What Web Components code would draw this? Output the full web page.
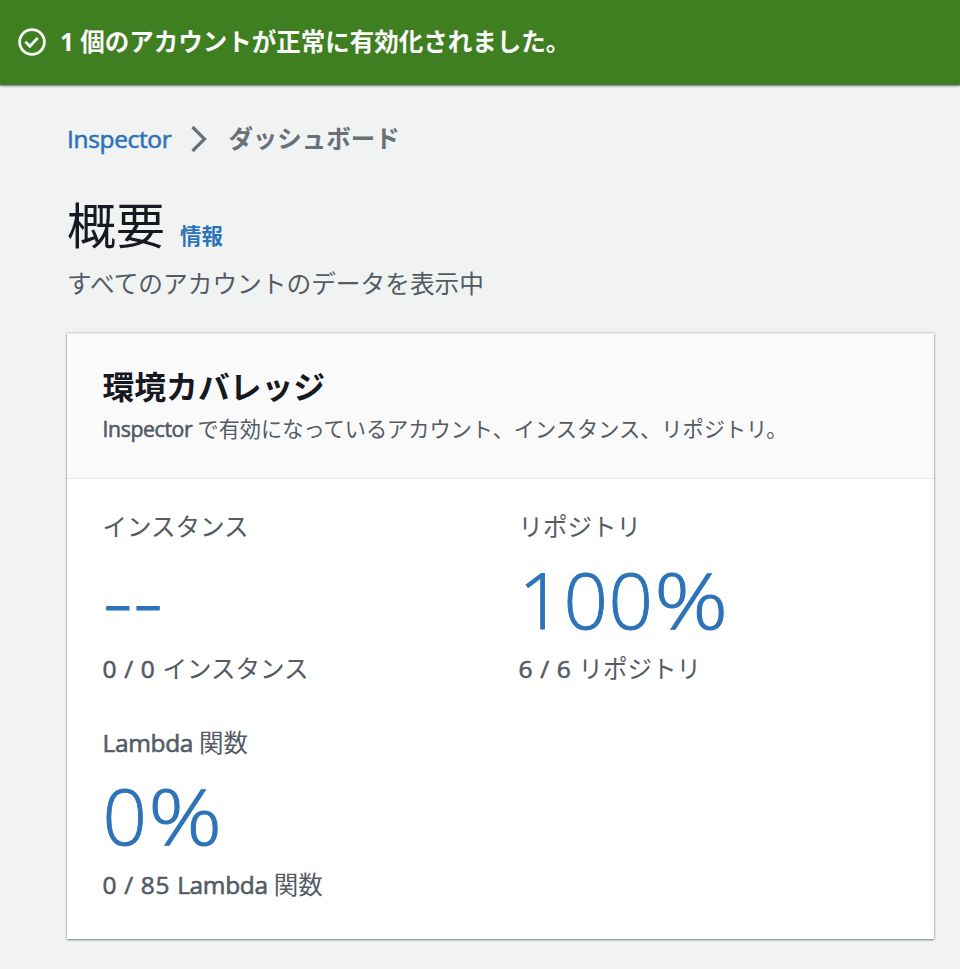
<!DOCTYPE html>
<html lang="ja">
  <head>
    <meta charset="utf-8" />
    <title>Inspector</title>
    <style>
      body {
        margin: 0;
        min-height: 969px;
        background: #f1f3f3;
        color: #545b64;
        font-family: 'Open Sans', 'Noto Sans CJK JP', sans-serif;
        font-size: 24.5px;
      }
    </style>
  </head>
  <body>
    <template id="flash-tmpl">
      <style>
        :host {
          display: flex;
          align-items: center;
          gap: 14px;
          box-sizing: border-box;
          height: 85px;
          padding: 0 18px 1px;
          background: #3f7f22;
          color: #fafafa;
          font-size: 24.5px;
          font-weight: 700;
          line-height: 36px;
          box-shadow: 0 1px 2px #6b6672;
        }
        svg {
          flex: none;
          width: 28px;
          height: 28px;
        }
      </style>
      <svg viewBox="0 0 28 28" fill="none" stroke="currentColor" stroke-width="2.8">
        <circle cx="14" cy="14" r="12.4" />
        <path d="M7.4 13.8l4.5 4.4 7.8-8.2" />
      </svg>
      <span><slot></slot></span>
    </template>

    <template id="crumbs-tmpl">
      <style>
        :host {
          display: flex;
          align-items: center;
          gap: 19px;
          height: 36px;
          line-height: 36px;
        }
        a {
          color: #2e73b8;
        }
        svg {
          width: 18px;
          height: 28px;
        }
        b {
          margin-left: 1px;
          color: #687078;
        }
      </style>
      <a><slot name="parent"></slot></a>
      <svg viewBox="0 0 18 28" fill="none" stroke="#687078" stroke-width="3.2">
        <path d="M2.5 2L14.5 14 2.5 26" />
      </svg>
      <b><slot></slot></b>
    </template>

    <template id="heading-tmpl">
      <style>
        :host {
          display: block;
        }
        .row {
          display: flex;
          align-items: baseline;
          gap: 15px;
          height: 76px;
          line-height: 72px;
        }
        h1 {
          margin: 0;
          color: #16191f;
          font-size: 49px;
          font-weight: 400;
        }
        .info {
          color: #2e73b8;
          font-size: 21.4px;
          font-weight: 700;
        }
        p {
          margin: 0;
          font-size: 24.7px;
          line-height: 38px;
        }
      </style>
      <div class="row">
        <h1><slot></slot></h1>
        <span class="info"><slot name="info"></slot></span>
      </div>
      <p><slot name="description"></slot></p>
    </template>

    <template id="card-tmpl">
      <style>
        :host {
          display: block;
          background: #fff;
          box-shadow: 0 1px 2px #7d878b, 0 0 2px #aab7b8;
        }
        header {
          box-sizing: border-box;
          height: 146px;
          padding: 30px 35px 0 35.5px;
          border-top: 1px solid #e9ebeb;
          border-bottom: 1px solid #e6e9e9;
          background: #fafafa;
        }
        h2 {
          margin: 0;
          color: #16191f;
          font-size: 31.8px;
          line-height: 45px;
        }
        p {
          margin: 0;
          font-size: 21.2px;
          line-height: 40px;
        }
        .body {
          display: grid;
          grid-template-columns: 1fr 1fr;
          gap: 36px;
          padding: 30px 35.5px 34px;
        }
      </style>
      <header>
        <h2><slot name="title"></slot></h2>
        <p><slot name="description"></slot></p>
      </header>
      <div class="body"><slot></slot></div>
    </template>

    <template id="stat-tmpl">
      <style>
        :host {
          display: block;
          height: 180px;
          line-height: 36px;
        }
        .value {
          height: 106px;
          color: #2e73b8;
          font-size: 78px;
          font-weight: 300;
          letter-spacing: 0.5px;
          line-height: 108px;
          -webkit-text-stroke: 0.9px currentColor;
        }
      </style>
      <div><slot name="label"></slot></div>
      <div class="value"><slot name="value"></slot></div>
      <div><slot></slot></div>
    </template>

    <template id="wide-tmpl">
      <style>
        :host {
          display: inline-block;
          transform: scaleX(1.18);
          transform-origin: left;
        }
      </style>
      <slot></slot>
    </template>

    <template id="latin-tmpl">
      <style>
        :host {
          letter-spacing: -0.35px;
          -webkit-text-stroke: 0.6px currentColor;
        }
        :host([numeric]) {
          letter-spacing: 0.65px;
        }
      </style>
      <slot></slot>
    </template>

    <template id="page-tmpl">
      <style>
        :host {
          display: flex;
          flex-direction: column;
          padding: 36px 26px 30px 67px;
        }
        ::slotted(page-heading) {
          margin: 32px 0 30px;
        }
      </style>
      <slot></slot>
    </template>

    <flash-bar>1 個のアカウントが正常に有効化されました。</flash-bar>
    <page-content>
      <bread-crumbs>
        <latin-text slot="parent">Inspector</latin-text>
        ダッシュボード
      </bread-crumbs>
      <page-heading>
        概要
        <span slot="info">情報</span>
        <span slot="description">すべてのアカウントのデータを表示中</span>
      </page-heading>
      <info-card>
        <span slot="title">環境カバレッジ</span>
        <span slot="description"><latin-text>Inspector </latin-text>で有効になっているアカウント、インスタンス、リポジトリ。</span>
        <stat-item>
          <span slot="label">インスタンス</span>
          <wide-text slot="value">--</wide-text>
          <latin-text numeric>0 / 0 </latin-text>インスタンス
        </stat-item>
        <stat-item>
          <span slot="label">リポジトリ</span>
          <span slot="value">100<wide-text>%</wide-text></span>
          <latin-text numeric>6 / 6 </latin-text>リポジトリ
        </stat-item>
        <stat-item>
          <span slot="label"><latin-text>Lambda </latin-text>関数</span>
          <span slot="value">0<wide-text>%</wide-text></span>
          <latin-text numeric>0 / 85 </latin-text><latin-text>Lambda </latin-text>関数
        </stat-item>
      </info-card>
    </page-content>

    <script>
      // Stamps the template with the given id into an open shadow root.
      function define(name, templateId) {
        customElements.define(
          name,
          class extends HTMLElement {
            constructor() {
              super();
              this.attachShadow({ mode: 'open' }).append(
                document.getElementById(templateId).content.cloneNode(true)
              );
            }
          }
        );
      }

      define('flash-bar', 'flash-tmpl');
      define('bread-crumbs', 'crumbs-tmpl');
      define('page-heading', 'heading-tmpl');
      define('info-card', 'card-tmpl');
      define('stat-item', 'stat-tmpl');
      define('wide-text', 'wide-tmpl');
      define('latin-text', 'latin-tmpl');
      define('page-content', 'page-tmpl');
    </script>
  </body>
</html>
